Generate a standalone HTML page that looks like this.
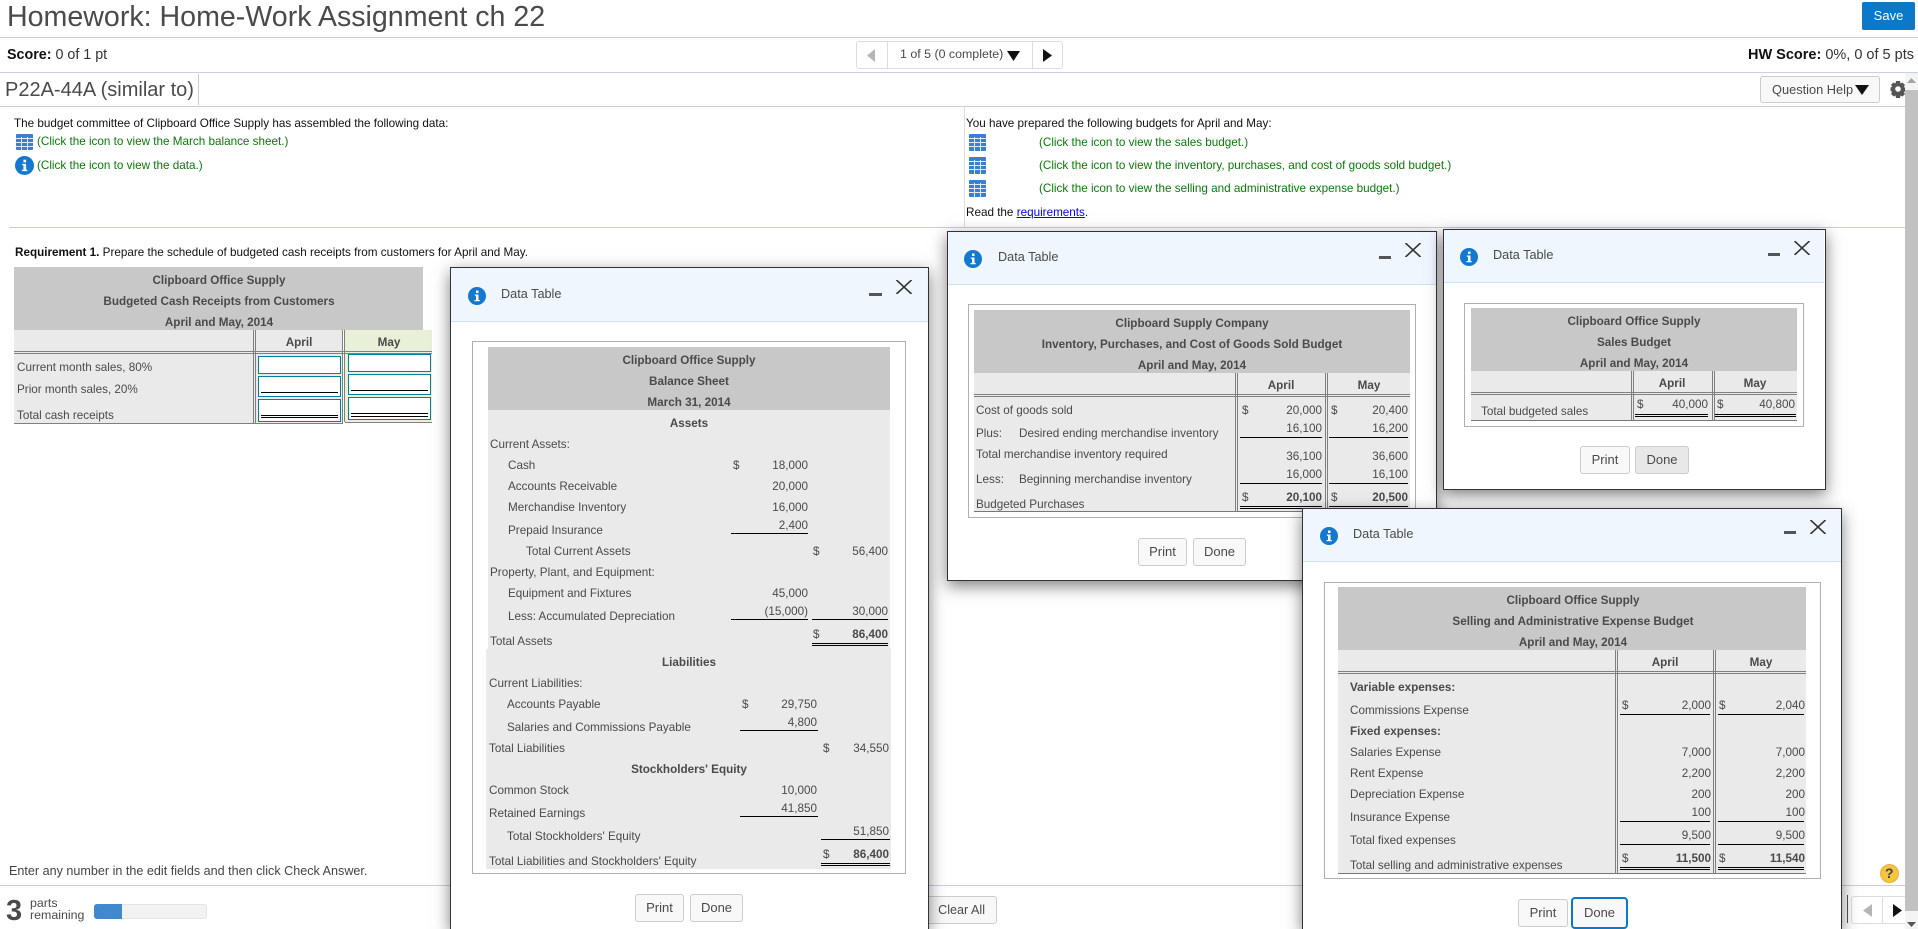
<!DOCTYPE html>
<html lang="en"><head><meta charset="utf-8"><title>Homework</title>
<style>
html,body{margin:0;padding:0;width:1918px;height:929px;overflow:hidden;background:#fff}
body{position:relative;font-family:"Liberation Sans",Arial,sans-serif;font-size:12px;color:#4a4a4a}
.layer{position:absolute;left:0;top:0;width:1918px;height:929px;overflow:hidden}
.t{position:absolute;white-space:nowrap;line-height:14px;font-size:11.7px;color:#4a4a4a;margin-top:1px}
.t[style*="font-size"]{margin-top:0}
.k{color:#111}.gr{color:#0a7a0a}.b{font-weight:bold}
.c{transform:translateX(-50%)}
.l{position:absolute;background:#000;height:1px}
.h{position:absolute;background:#c9cfe0;height:1px}
.box{position:absolute;box-sizing:border-box}
.m{position:absolute;box-sizing:border-box;background:#fff;border:1px solid #333;box-shadow:0 5px 15px rgba(0,0,0,.5)}
.mh{position:absolute;box-sizing:border-box;background:#f0f6fe;border-bottom:1px solid #cfe2f0}
.btn{position:absolute;box-sizing:border-box;background:#f8f8f8;border:1px solid #ccc;border-radius:3px;text-align:center;font-size:13px;color:#4a4a4a;line-height:26px}
.inner{position:absolute;box-sizing:border-box;border:1px solid #b0b0b0;background:#fff}
svg{position:absolute;display:block}
</style></head><body>

<!-- base page -->
<div class="layer">
<div class="t" style="left:7px;top:1px;font-size:28.6px;line-height:32px">Homework: Home-Work Assignment ch 22</div>
<div class="box" style="left:1862px;top:2px;width:53px;height:28px;background:#0b78c8;border-radius:2px;color:#fff;text-align:center;line-height:28px;font-size:13px">Save</div>
<div class="h" style="left:0;top:37px;width:1918px"></div>

<div class="t k" style="left:7px;top:48px;font-size:14.3px"><b>Score:</b> <span style="color:#333">0 of 1 pt</span></div>
<div class="box" style="left:856px;top:41px;width:207px;height:28px;border:1px solid #ddd;border-radius:3px;background:#fff"></div>
<div class="box" style="left:887px;top:42px;width:1px;height:26px;background:#ddd"></div>
<div class="box" style="left:1032px;top:42px;width:1px;height:26px;background:#ddd"></div>
<svg style="left:867px;top:49px" width="9" height="13"><path d="M8 0V13L0 6.500Z" fill="#b5b5b5"/></svg>
<div class="t" style="left:900px;top:47px;font-size:12.4px">1 of 5 (0 complete)</div>
<svg style="left:1007px;top:51px" width="13" height="10"><path d="M0 0H13L6.500 10Z" fill="#111"/></svg>
<svg style="left:1043px;top:49px" width="9" height="13"><path d="M0 0V13L9 6.500Z" fill="#111"/></svg>
<div class="t" style="right:4px;top:48px;font-size:14.5px;color:#333"><b class="k">HW Score:</b> 0%, 0 of 5 pts</div>
<div class="h" style="left:0;top:72px;width:1918px"></div>

<div class="t" style="left:5px;top:78px;font-size:20px;line-height:24px">P22A-44A (similar to)</div>
<div class="box" style="left:198px;top:74px;width:1px;height:31px;background:#ccc"></div>
<div class="btn" style="left:1760px;top:76px;width:120px;height:27px;line-height:25px;font-size:12.8px;text-align:left;padding-left:11px">Question Help</div>
<svg style="left:1855px;top:85px" width="14" height="10"><path d="M0 0H14L7 10Z" fill="#111"/></svg>
<svg style="left:1890px;top:80px" width="16" height="18" viewBox="0 0 16 18"><path fill-rule="evenodd" fill="#555" d="M6 1h4l.5 2.500 2-1 2.500 2.500-1.200 2 1.700.8v3.400l-1.700.8 1.200 2-2.500 2.500-2-1-.5 2.500H6l-.5-2.500-2 1L1 13.800l1.200-2-1.700-.8V7.600l1.700-.8-1.200-2L3.500 2.500l2 1zM8 6.200a2.800 2.800 0 100 5.600 2.800 2.800 0 000-5.600z"/></svg>
<div class="h" style="left:0;top:106px;width:1905px"></div>

<div class="t k" style="left:14px;top:116px">The budget committee of Clipboard Office Supply has assembled the following data:</div>
<svg style="left:16px;top:134px" width="17" height="16"><rect width="17" height="16" rx="1" fill="#3b7fd0"/><path d="M0 4.500H17M0 8.500H17M0 12.500H17M5.500 3V16M11.500 3V16" stroke="#fff" stroke-width="1" stroke-opacity=".85"/></svg>
<div class="t gr" style="left:37px;top:134px">(Click the icon to view the March balance sheet.)</div>
<svg style="left:15px;top:156px" width="19" height="19" viewBox="0 0 18 18"><circle cx="9" cy="9" r="9" fill="#1478cf"/><path d="M8 3.500h2.500v2.500H8zM6.800 7.500h3.700v5.500h1.200v1.300H6.500V13h1.500V8.800H6.800z" fill="#fff"/></svg>
<div class="t gr" style="left:37px;top:158px">(Click the icon to view the data.)</div>

<div class="box" style="left:964px;top:106px;width:1px;height:121px;background:#ddd"></div>
<div class="t k" style="left:966px;top:116px">You have prepared the following budgets for April and May:</div>
<svg style="left:969px;top:134px" width="17" height="17"><rect width="17" height="17" rx="1" fill="#3b7fd0"/><path d="M0 4.500H17M0 8.500H17M0 12.500H17M5.500 3V17M11.500 3V17" stroke="#fff" stroke-width="1" stroke-opacity=".85"/></svg>
<div class="t gr" style="left:1039px;top:135px">(Click the icon to view the sales budget.)</div>
<svg style="left:969px;top:157px" width="17" height="17"><rect width="17" height="17" rx="1" fill="#3b7fd0"/><path d="M0 4.500H17M0 8.500H17M0 12.500H17M5.500 3V17M11.500 3V17" stroke="#fff" stroke-width="1" stroke-opacity=".85"/></svg>
<div class="t gr" style="left:1039px;top:158px">(Click the icon to view the inventory, purchases, and cost of goods sold budget.)</div>
<svg style="left:969px;top:180px" width="17" height="17"><rect width="17" height="17" rx="1" fill="#3b7fd0"/><path d="M0 4.500H17M0 8.500H17M0 12.500H17M5.500 3V17M11.500 3V17" stroke="#fff" stroke-width="1" stroke-opacity=".85"/></svg>
<div class="t gr" style="left:1039px;top:181px">(Click the icon to view the selling and administrative expense budget.)</div>
<div class="t k" style="left:966px;top:205px">Read the <span style="color:#00e;text-decoration:underline">requirements</span><span>.</span></div>
<div class="h" style="left:9px;top:227px;width:1896px;background:#ccd"></div>

<div class="t k" style="left:15px;top:245px"><b>Requirement 1.</b> Prepare the schedule of budgeted cash receipts from customers for April and May.</div>

<!-- schedule table -->
<div class="box" style="left:14px;top:267px;width:409px;height:63px;background:#c8c8c8"></div>
<div class="t b c" style="left:219px;top:273px">Clipboard Office Supply</div>
<div class="t b c" style="left:219px;top:294px">Budgeted Cash Receipts from Customers</div>
<div class="t b c" style="left:219px;top:315px">April and May, 2014</div>
<div class="box" style="left:14px;top:330px;width:328px;height:94px;background:#eaeaea"></div>
<div class="box" style="left:345px;top:330px;width:87px;height:92px;background:#e8f0d8"></div>
<div class="t b c" style="left:299px;top:335px">April</div>
<div class="t b c" style="left:389px;top:335px">May</div>
<div class="l" style="left:14px;top:351px;width:418px;background:#808080"></div>
<div class="l" style="left:14px;top:353px;width:418px;background:#808080"></div>
<div class="box" style="left:253px;top:330px;width:1px;height:94px;background:#808080"></div>
<div class="box" style="left:255px;top:330px;width:1px;height:94px;background:#808080"></div>
<div class="box" style="left:342px;top:330px;width:1px;height:94px;background:#808080"></div>
<div class="box" style="left:344px;top:330px;width:1px;height:92px;background:#808080"></div>
<div class="t" style="left:17px;top:360px">Current month sales, 80%</div>
<div class="t" style="left:17px;top:382px">Prior month sales, 20%</div>
<div class="t" style="left:17px;top:408px">Total cash receipts</div>
<div class="l" style="left:14px;top:423px;width:328px;background:#808080"></div>
<div class="l" style="left:345px;top:422px;width:87px;background:#808080"></div>
<div class="box" style="left:258px;top:356px;width:83px;height:18px;background:#fff;border:1px solid #00809f"></div>
<div class="box" style="left:258px;top:376px;width:83px;height:21px;background:#fff;border:1px solid #00809f"></div>
<div class="box" style="left:258px;top:399px;width:83px;height:23px;background:#fff;border:1px solid #00809f"></div>
<div class="box" style="left:348px;top:354px;width:83px;height:18px;background:#fff;border:1px solid #00809f"></div>
<div class="box" style="left:348px;top:374px;width:83px;height:21px;background:#fff;border:1px solid #00809f"></div>
<div class="box" style="left:348px;top:397px;width:83px;height:23px;background:#fff;border:1px solid #00809f"></div>
<div class="l" style="left:261px;top:392px;width:77px"></div>
<div class="l" style="left:261px;top:415px;width:77px"></div>
<div class="l" style="left:261px;top:417px;width:77px"></div>
<div class="l" style="left:351px;top:390px;width:77px"></div>
<div class="l" style="left:351px;top:413px;width:77px"></div>
<div class="l" style="left:351px;top:416px;width:77px"></div>

<!-- bottom -->
<div class="t" style="left:9px;top:864px;color:#444;font-size:12.6px">Enter any number in the edit fields and then click Check Answer.</div>
<div class="h" style="left:0;top:885px;width:1905px"></div>
<div class="t b" style="left:6px;top:896px;font-size:29px;line-height:30px">3</div>
<div class="t" style="left:30px;top:897px;font-size:12.4px;line-height:12px">parts<br>remaining</div>
<div class="box" style="left:94px;top:904px;width:113px;height:15px;background:#f2f2f2;border:1px solid #e4e4e4;border-radius:3px"></div>
<div class="box" style="left:94px;top:904px;width:28px;height:15px;background:#3f89cc;border-radius:3px 0 0 3px"></div>
<div class="btn" style="left:900px;top:896px;width:97px;height:28px;text-align:right;padding-right:11px;font-size:12.6px">Clear All</div>
<svg style="left:1880px;top:864px" width="19" height="19"><circle cx="9.500" cy="9.500" r="9" fill="#f5c542" stroke="#e6b23a"/></svg>
<div class="t b" style="left:1885px;top:866px;font-size:14px;color:#444">?</div>
<div class="box" style="left:1847px;top:895px;width:1px;height:28px;background:#555"></div>
<div class="box" style="left:1851px;top:896px;width:60px;height:28px;border:1px solid #ddd;border-radius:3px;background:#fff"></div>
<div class="box" style="left:1882px;top:897px;width:1px;height:26px;background:#ddd"></div>
<svg style="left:1863px;top:904px" width="9" height="13"><path d="M9 0V13L0 6.500Z" fill="#b5b5b5"/></svg>
<svg style="left:1893px;top:904px" width="9" height="13"><path d="M0 0V13L9 6.500Z" fill="#111"/></svg>

<!-- scrollbar -->
<div class="box" style="left:1905px;top:73px;width:13px;height:856px;background:#f4f4f4"></div>
<div class="box" style="left:1905px;top:90px;width:13px;height:821px;background:#c1c1c1"></div>
<svg style="left:1907px;top:78px" width="9" height="5"><path d="M0 5H9L4.500 0Z" fill="#a3a3a3"/></svg>
<svg style="left:1907px;top:922px" width="9" height="5"><path d="M0 0H9L4.500 5Z" fill="#555"/></svg>
</div>

<!-- Modal: Balance sheet -->
<div class="layer">
<div class="m" style="left:450px;top:267px;width:479px;height:662px;border-bottom:none"></div>
<div class="mh" style="left:451px;top:268px;width:477px;height:54px"></div>
<svg style="left:468px;top:287px" width="18" height="18" viewBox="0 0 18 18"><circle cx="9" cy="9" r="9" fill="#1478cf"/><path d="M8 3.500h2.500v2.500H8zM6.800 7.500h3.700v5.500h1.200v1.300H6.500V13h1.500V8.800H6.800z" fill="#fff"/></svg>
<div class="t" style="left:501px;top:287px;font-size:12.7px">Data Table</div>
<div class="box" style="left:869px;top:293px;width:13px;height:3px;background:#555"></div>
<svg style="left:896px;top:280px" width="16" height="14"><path d="M.5 0L15.500 14M15.500 0L.5 14" stroke="#333" stroke-width="1.600"/></svg>
<div class="inner" style="left:472px;top:341px;width:434px;height:533px"></div>
<div class="box" style="left:488px;top:347px;width:402px;height:63px;background:#c8c8c8"></div>
<div class="box" style="left:488px;top:410px;width:402px;height:239px;background:#eaeaea"></div>
<div class="box" style="left:486px;top:649px;width:405px;height:220px;background:#eaeaea"></div>
<div class="t b c" style="left:689px;top:353px">Clipboard Office Supply</div>
<div class="t b c" style="left:689px;top:374px">Balance Sheet</div>
<div class="t b c" style="left:689px;top:395px">March 31, 2014</div>
<div class="t b c" style="left:689px;top:416px">Assets</div>
<div class="t" style="left:490px;top:437px">Current Assets:</div>
<div class="t" style="left:508px;top:458px">Cash</div>
<div class="t" style="left:733px;top:458px">$</div><div class="t" style="right:1110px;top:458px">18,000</div>
<div class="t" style="left:508px;top:479px">Accounts Receivable</div><div class="t" style="right:1110px;top:479px">20,000</div>
<div class="t" style="left:508px;top:500px">Merchandise Inventory</div><div class="t" style="right:1110px;top:500px">16,000</div>
<div class="t" style="left:508px;top:523px">Prepaid Insurance</div><div class="t" style="right:1110px;top:518px">2,400</div>
<div class="l" style="left:731px;top:533px;width:77px"></div>
<div class="t" style="left:526px;top:544px">Total Current Assets</div>
<div class="t" style="left:813px;top:544px">$</div><div class="t" style="right:1030px;top:544px">56,400</div>
<div class="t" style="left:490px;top:565px">Property, Plant, and Equipment:</div>
<div class="t" style="left:508px;top:586px">Equipment and Fixtures</div><div class="t" style="right:1110px;top:586px">45,000</div>
<div class="t" style="left:508px;top:609px">Less: Accumulated Depreciation</div><div class="t" style="right:1110px;top:604px">(15,000)</div>
<div class="t" style="right:1030px;top:604px">30,000</div>
<div class="l" style="left:731px;top:619px;width:77px"></div><div class="l" style="left:812px;top:619px;width:76px"></div>
<div class="t" style="left:490px;top:634px">Total Assets</div>
<div class="t" style="left:813px;top:627px">$</div><div class="t b" style="right:1030px;top:627px">86,400</div>
<div class="l" style="left:812px;top:643px;width:76px"></div><div class="l" style="left:812px;top:645px;width:76px"></div>
<div class="t b c" style="left:689px;top:655px">Liabilities</div>
<div class="t" style="left:489px;top:676px">Current Liabilities:</div>
<div class="t" style="left:507px;top:697px">Accounts Payable</div>
<div class="t" style="left:742px;top:697px">$</div><div class="t" style="right:1101px;top:697px">29,750</div>
<div class="t" style="left:507px;top:720px">Salaries and Commissions Payable</div><div class="t" style="right:1101px;top:715px">4,800</div>
<div class="l" style="left:740px;top:730px;width:78px"></div>
<div class="t" style="left:489px;top:741px">Total Liabilities</div>
<div class="t" style="left:823px;top:741px">$</div><div class="t" style="right:1029px;top:741px">34,550</div>
<div class="t b c" style="left:689px;top:762px">Stockholders' Equity</div>
<div class="t" style="left:489px;top:783px">Common Stock</div><div class="t" style="right:1101px;top:783px">10,000</div>
<div class="t" style="left:489px;top:806px">Retained Earnings</div><div class="t" style="right:1101px;top:801px">41,850</div>
<div class="l" style="left:740px;top:816px;width:78px"></div>
<div class="t" style="left:507px;top:829px">Total Stockholders' Equity</div><div class="t" style="right:1029px;top:824px">51,850</div>
<div class="l" style="left:821px;top:839px;width:69px"></div>
<div class="t" style="left:489px;top:854px">Total Liabilities and Stockholders' Equity</div>
<div class="t" style="left:823px;top:847px">$</div><div class="t b" style="right:1029px;top:847px">86,400</div>
<div class="l" style="left:821px;top:863px;width:69px"></div><div class="l" style="left:821px;top:865px;width:69px"></div>
<div class="btn" style="left:635px;top:894px;width:49px;height:28px">Print</div>
<div class="btn" style="left:690px;top:894px;width:53px;height:28px">Done</div>
</div>

<!-- Modal: Inventory -->
<div class="layer">
<div class="m" style="left:947px;top:231px;width:490px;height:350px"></div>
<div class="mh" style="left:948px;top:232px;width:488px;height:53px"></div>
<svg style="left:964px;top:250px" width="18" height="18" viewBox="0 0 18 18"><circle cx="9" cy="9" r="9" fill="#1478cf"/><path d="M8 3.500h2.500v2.500H8zM6.800 7.500h3.700v5.500h1.200v1.300H6.500V13h1.500V8.800H6.800z" fill="#fff"/></svg>
<div class="t" style="left:998px;top:250px;font-size:12.7px">Data Table</div>
<div class="box" style="left:1379px;top:256px;width:12px;height:3px;background:#555"></div>
<svg style="left:1405px;top:243px" width="16" height="14"><path d="M.5 0L15.500 14M15.500 0L.5 14" stroke="#333" stroke-width="1.600"/></svg>
<div class="inner" style="left:968px;top:304px;width:448px;height:214px"></div>
<div class="box" style="left:974px;top:310px;width:436px;height:63px;background:#c8c8c8"></div>
<div class="box" style="left:974px;top:373px;width:436px;height:139px;background:#eaeaea;border-bottom:1px solid #777"></div>
<div class="t b c" style="left:1192px;top:316px">Clipboard Supply Company</div>
<div class="t b c" style="left:1192px;top:337px">Inventory, Purchases, and Cost of Goods Sold Budget</div>
<div class="t b c" style="left:1192px;top:358px">April and May, 2014</div>
<div class="t b c" style="left:1281px;top:378px">April</div>
<div class="t b c" style="left:1369px;top:378px">May</div>
<div class="l" style="left:974px;top:394px;width:436px;background:#808080"></div>
<div class="l" style="left:974px;top:396px;width:436px;background:#808080"></div>
<div class="box" style="left:1235px;top:373px;width:1px;height:139px;background:#808080"></div>
<div class="box" style="left:1237px;top:373px;width:1px;height:139px;background:#808080"></div>
<div class="box" style="left:1325px;top:373px;width:1px;height:139px;background:#808080"></div>
<div class="box" style="left:1327px;top:373px;width:1px;height:139px;background:#808080"></div>
<div class="t" style="left:976px;top:403px">Cost of goods sold</div>
<div class="t" style="left:1242px;top:403px">$</div><div class="t" style="right:596px;top:403px">20,000</div>
<div class="t" style="left:1331px;top:403px">$</div><div class="t" style="right:510px;top:403px">20,400</div>
<div class="t" style="left:976px;top:426px">Plus:</div><div class="t" style="left:1019px;top:426px">Desired ending merchandise inventory</div>
<div class="t" style="right:596px;top:421px">16,100</div><div class="t" style="right:510px;top:421px">16,200</div>
<div class="l" style="left:1240px;top:437px;width:82px"></div><div class="l" style="left:1329px;top:437px;width:79px"></div>
<div class="t" style="left:976px;top:447px">Total merchandise inventory required</div>
<div class="t" style="right:596px;top:449px">36,100</div><div class="t" style="right:510px;top:449px">36,600</div>
<div class="t" style="left:976px;top:472px">Less:</div><div class="t" style="left:1019px;top:472px">Beginning merchandise inventory</div>
<div class="t" style="right:596px;top:467px">16,000</div><div class="t" style="right:510px;top:467px">16,100</div>
<div class="l" style="left:1240px;top:483px;width:82px"></div><div class="l" style="left:1329px;top:483px;width:79px"></div>
<div class="t" style="left:976px;top:497px">Budgeted Purchases</div>
<div class="t" style="left:1242px;top:490px">$</div><div class="t b" style="right:596px;top:490px">20,100</div>
<div class="t" style="left:1331px;top:490px">$</div><div class="t b" style="right:510px;top:490px">20,500</div>
<div class="l" style="left:1240px;top:506px;width:82px"></div><div class="l" style="left:1240px;top:508px;width:82px"></div>
<div class="l" style="left:1329px;top:506px;width:79px"></div><div class="l" style="left:1329px;top:508px;width:79px"></div>
<div class="btn" style="left:1138px;top:538px;width:49px;height:28px">Print</div>
<div class="btn" style="left:1193px;top:538px;width:53px;height:28px">Done</div>
</div>

<!-- Modal: Sales -->
<div class="layer">
<div class="m" style="left:1443px;top:229px;width:383px;height:261px"></div>
<div class="mh" style="left:1444px;top:230px;width:380px;height:53px"></div>
<svg style="left:1460px;top:248px" width="18" height="18" viewBox="0 0 18 18"><circle cx="9" cy="9" r="9" fill="#1478cf"/><path d="M8 3.500h2.500v2.500H8zM6.800 7.500h3.700v5.500h1.200v1.300H6.500V13h1.500V8.800H6.800z" fill="#fff"/></svg>
<div class="t" style="left:1493px;top:248px;font-size:12.7px">Data Table</div>
<div class="box" style="left:1768px;top:253px;width:12px;height:3px;background:#555"></div>
<svg style="left:1794px;top:241px" width="16" height="14"><path d="M.5 0L15.500 14M15.500 0L.5 14" stroke="#333" stroke-width="1.600"/></svg>
<div class="inner" style="left:1464px;top:303px;width:340px;height:124px"></div>
<div class="box" style="left:1471px;top:308px;width:326px;height:63px;background:#c8c8c8"></div>
<div class="box" style="left:1471px;top:371px;width:326px;height:50px;background:#eaeaea;border-bottom:1px solid #777"></div>
<div class="t b c" style="left:1634px;top:314px">Clipboard Office Supply</div>
<div class="t b c" style="left:1634px;top:335px">Sales Budget</div>
<div class="t b c" style="left:1634px;top:356px">April and May, 2014</div>
<div class="t b c" style="left:1672px;top:376px">April</div>
<div class="t b c" style="left:1755px;top:376px">May</div>
<div class="l" style="left:1471px;top:392px;width:326px;background:#808080"></div>
<div class="l" style="left:1471px;top:394px;width:326px;background:#808080"></div>
<div class="box" style="left:1631px;top:371px;width:1px;height:50px;background:#808080"></div>
<div class="box" style="left:1633px;top:371px;width:1px;height:50px;background:#808080"></div>
<div class="box" style="left:1712px;top:371px;width:1px;height:50px;background:#808080"></div>
<div class="box" style="left:1714px;top:371px;width:1px;height:50px;background:#808080"></div>
<div class="t" style="left:1481px;top:404px">Total budgeted sales</div>
<div class="t" style="left:1637px;top:397px">$</div><div class="t" style="right:210px;top:397px">40,000</div>
<div class="t" style="left:1717px;top:397px">$</div><div class="t" style="right:123px;top:397px">40,800</div>
<div class="l" style="left:1635px;top:414px;width:73px"></div><div class="l" style="left:1635px;top:416px;width:73px"></div>
<div class="l" style="left:1715px;top:414px;width:81px"></div><div class="l" style="left:1715px;top:416px;width:81px"></div>
<div class="btn" style="left:1580px;top:446px;width:50px;height:28px">Print</div>
<div class="btn" style="left:1635px;top:446px;width:54px;height:28px;background:#e8e8e8">Done</div>
</div>

<!-- Modal: Selling -->
<div class="layer">
<div class="m" style="left:1302px;top:508px;width:540px;height:421px;border-bottom:none"></div>
<div class="mh" style="left:1303px;top:509px;width:538px;height:53px"></div>
<svg style="left:1320px;top:527px" width="18" height="18" viewBox="0 0 18 18"><circle cx="9" cy="9" r="9" fill="#1478cf"/><path d="M8 3.500h2.500v2.500H8zM6.800 7.500h3.700v5.500h1.200v1.300H6.500V13h1.500V8.800H6.800z" fill="#fff"/></svg>
<div class="t" style="left:1353px;top:527px;font-size:12.7px">Data Table</div>
<div class="box" style="left:1784px;top:531px;width:12px;height:3px;background:#555"></div>
<svg style="left:1810px;top:520px" width="16" height="14"><path d="M.5 0L15.500 14M15.500 0L.5 14" stroke="#333" stroke-width="1.600"/></svg>
<div class="inner" style="left:1324px;top:582px;width:497px;height:297px"></div>
<div class="box" style="left:1338px;top:587px;width:468px;height:63px;background:#c8c8c8"></div>
<div class="box" style="left:1338px;top:650px;width:468px;height:224px;background:#eaeaea;border-bottom:1px solid #777"></div>
<div class="t b c" style="left:1573px;top:593px">Clipboard Office Supply</div>
<div class="t b c" style="left:1573px;top:614px">Selling and Administrative Expense Budget</div>
<div class="t b c" style="left:1573px;top:635px">April and May, 2014</div>
<div class="t b c" style="left:1665px;top:655px">April</div>
<div class="t b c" style="left:1761px;top:655px">May</div>
<div class="l" style="left:1338px;top:671px;width:468px;background:#808080"></div>
<div class="l" style="left:1338px;top:673px;width:468px;background:#808080"></div>
<div class="box" style="left:1615px;top:650px;width:1px;height:224px;background:#808080"></div>
<div class="box" style="left:1617px;top:650px;width:1px;height:224px;background:#808080"></div>
<div class="box" style="left:1713px;top:650px;width:1px;height:224px;background:#808080"></div>
<div class="box" style="left:1715px;top:650px;width:1px;height:224px;background:#808080"></div>
<div class="t b" style="left:1350px;top:680px">Variable expenses:</div>
<div class="t" style="left:1350px;top:703px">Commissions Expense</div>
<div class="t" style="left:1622px;top:698px">$</div><div class="t" style="right:207px;top:698px">2,000</div>
<div class="t" style="left:1719px;top:698px">$</div><div class="t" style="right:113px;top:698px">2,040</div>
<div class="l" style="left:1620px;top:714px;width:90px"></div><div class="l" style="left:1718px;top:714px;width:86px"></div>
<div class="t b" style="left:1350px;top:724px">Fixed expenses:</div>
<div class="t" style="left:1350px;top:745px">Salaries Expense</div><div class="t" style="right:207px;top:745px">7,000</div><div class="t" style="right:113px;top:745px">7,000</div>
<div class="t" style="left:1350px;top:766px">Rent Expense</div><div class="t" style="right:207px;top:766px">2,200</div><div class="t" style="right:113px;top:766px">2,200</div>
<div class="t" style="left:1350px;top:787px">Depreciation Expense</div><div class="t" style="right:207px;top:787px">200</div><div class="t" style="right:113px;top:787px">200</div>
<div class="t" style="left:1350px;top:810px">Insurance Expense</div><div class="t" style="right:207px;top:805px">100</div><div class="t" style="right:113px;top:805px">100</div>
<div class="l" style="left:1620px;top:821px;width:90px"></div><div class="l" style="left:1718px;top:821px;width:86px"></div>
<div class="t" style="left:1350px;top:833px">Total fixed expenses</div><div class="t" style="right:207px;top:828px">9,500</div><div class="t" style="right:113px;top:828px">9,500</div>
<div class="l" style="left:1620px;top:844px;width:90px"></div><div class="l" style="left:1718px;top:844px;width:86px"></div>
<div class="t" style="left:1350px;top:858px">Total selling and administrative expenses</div>
<div class="t" style="left:1622px;top:851px">$</div><div class="t b" style="right:207px;top:851px">11,500</div>
<div class="t" style="left:1719px;top:851px">$</div><div class="t b" style="right:113px;top:851px">11,540</div>
<div class="l" style="left:1620px;top:867px;width:90px"></div><div class="l" style="left:1620px;top:869px;width:90px"></div>
<div class="l" style="left:1718px;top:867px;width:86px"></div><div class="l" style="left:1718px;top:869px;width:86px"></div>
<div class="btn" style="left:1518px;top:899px;width:50px;height:28px">Print</div>
<div class="btn" style="left:1571px;top:897px;width:57px;height:32px;border:2px solid #0b78c8;border-radius:4px;background:#f8f8f8;line-height:28px">Done</div>
</div>

</body></html>
